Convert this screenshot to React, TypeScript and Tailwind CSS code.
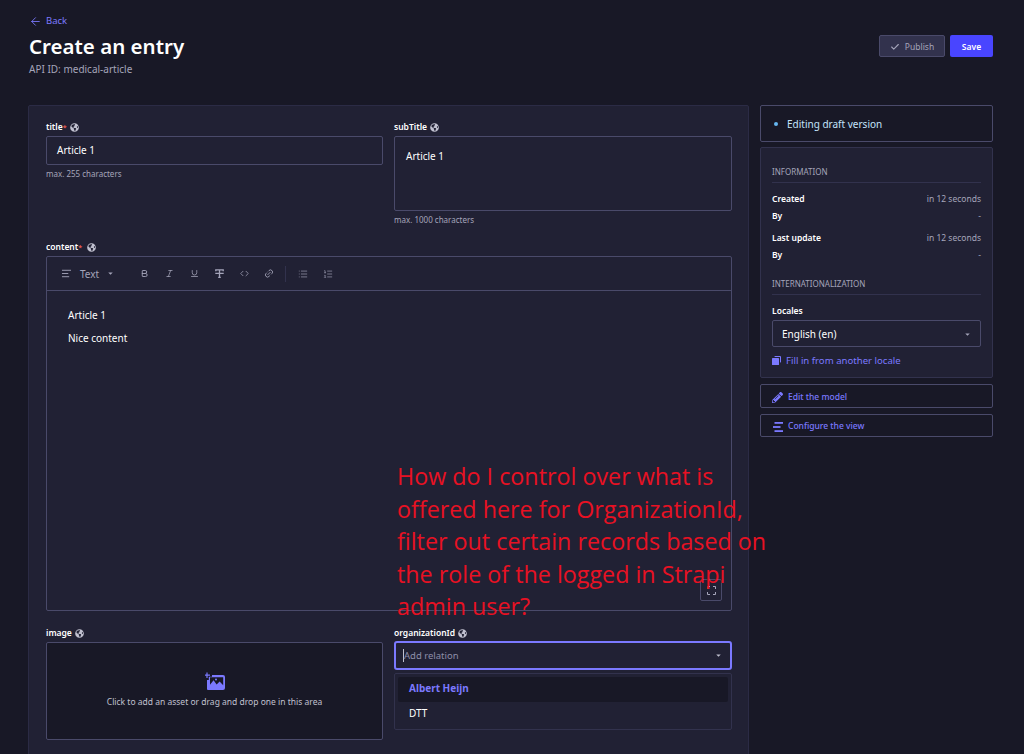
import { ArrowLeft, Check, Bold, Italic, Underline, Code, Link2, List, ListOrdered, AlignLeft } from "lucide-react";
import { FaGlobeAmericas, FaPencilAlt } from "react-icons/fa";

const Globe = ({ s = 9 }: { s?: number }) => <FaGlobeAmericas size={s} className="text-[#c0c0cf] shrink-0" />;

const Caret = ({ c = "#a5a5ba" }: { c?: string }) => (
  <svg width="5" height="3" viewBox="0 0 6 4" className="shrink-0"><path d="M0 0.5h6L3 3.7z" fill={c} /></svg>
);

const Label = ({ text, req, gap = "gap-[3px]" }: { text: string; req?: boolean; gap?: string }) => (
  <div className={`flex items-center h-[12px] mb-[3px] ${gap} text-[8.5px] font-semibold text-white leading-none`}>
    <span>{text}{req && <span className="text-[#ee5e52] text-[7px]">*</span>}</span>
    <Globe />
  </div>
);

const Helper = ({ text }: { text: string }) => (
  <div className="h-[12px] mt-[3px] text-[8px] leading-[12px] text-[#a5a5ba]">{text}</div>
);

const Row = ({ a, b, mt }: { a: string; b: string; mt: string }) => (
  <div className={`flex justify-between items-center h-[12px] ${mt} text-[8.5px] leading-none`}>
    <span className="font-semibold text-white">{a}</span>
    <span className="text-[#a5a5ba]">{b}</span>
  </div>
);

const Head = ({ text }: { text: string }) => (
  <div className="text-[8px] leading-[12px] text-[#a5a5ba] pb-[4px] border-b border-[#32324d]">{text}</div>
);

const Strike = () => (
  <svg width="9" height="9" viewBox="0 0 9 9" fill="none" stroke="#a5a5ba" strokeWidth="1.3">
    <path d="M0.8 2.2V0.9h7.4v1.3M4.5 1v7.4M3.2 8.4h2.6M0.3 4.4h8.4" />
  </svg>
);

const ToolIcon = ({ children, ml }: { children: React.ReactNode; ml: string }) => (
  <span className={`flex w-[10px] justify-center text-[#a5a5ba] ${ml}`}>{children}</span>
);

export default function App() {
  return (
    <div className="relative h-[754px] w-[1024px] overflow-hidden bg-[#181826] font-['Noto_Sans','Open_Sans',sans-serif]">
      <header className="flex justify-between pl-[29px] pr-[31px] pt-[14px] h-[105px]">
        <div>
          <div className="flex items-center gap-[4px] h-[14px] text-[9.5px] text-[#7b79ff]">
            <ArrowLeft size={13} strokeWidth={1.6} />
            <span>Back</span>
          </div>
          <h1 className="mt-[3px] text-[20.5px] leading-[30px] font-semibold text-white">Create an entry</h1>
          <div className="mt-[1px] text-[10px] leading-[14px] text-[#a5a5ba]">API ID: medical-article</div>
        </div>
        <div className="flex gap-[5px] pt-[21px]">
          <div className="flex items-center gap-[5px] h-[22px] w-[66px] justify-center rounded-[2px] border border-[#4a4a6a] bg-[#32324d] pt-[2px] text-[8.5px] text-[#a5a5ba]">
            <Check size={10} strokeWidth={2.6} />
            <span>Publish</span>
          </div>
          <div className="flex items-center justify-center h-[22px] w-[43px] rounded-[2px] bg-[#4945ff] pt-[2px] text-[8.5px] font-semibold text-white">Save</div>
        </div>
      </header>

      <div className="flex gap-[11px] pl-[28px] pr-[31px]">
        <main className="w-[721px] h-[660px] shrink-0 rounded-[2px] border border-[#2b2b45] bg-[#212134] pl-[17px] pr-[16px] pt-[15px]">
          <div className="grid grid-cols-[337px_338px] gap-x-[11px]">
            <div>
              <Label text="title" req />
              <div className="flex items-center h-[29px] rounded-[2px] border border-[#4a4a6a] bg-[#212134] pl-[10px] text-[10px] text-white">Article 1</div>
              <Helper text="max. 255 characters" />
            </div>
            <div>
              <Label text="subTitle" />
              <div className="h-[75px] rounded-[2px] border border-[#4a4a6a] bg-[#212134] pl-[11px] pt-[12px] text-[10px] leading-[14px] text-white">Article 1</div>
              <Helper text="max. 1000 characters" />
            </div>
          </div>

          <div className="mt-[15px]">
            <Label text="content" req gap="gap-[5px]" />
            <div className="relative h-[355px] rounded-[2px] border border-[#4a4a6a] bg-[#212134]">
              <div className="flex items-center h-[34px] border-b border-[#4a4a6a] pl-[14px]">
                <AlignLeft size={11} className="text-[#a5a5ba]" />
                <span className="ml-[8px] pt-px text-[10px] text-[#a5a5ba]">Text</span>
                <span className="ml-[9px]"><Caret /></span>
                <ToolIcon ml="ml-[26px]"><Bold size={9} strokeWidth={2.4} /></ToolIcon>
                <ToolIcon ml="ml-[15px]"><Italic size={9} strokeWidth={2} /></ToolIcon>
                <ToolIcon ml="ml-[15px]"><Underline size={9} strokeWidth={2} /></ToolIcon>
                <ToolIcon ml="ml-[15px]"><Strike /></ToolIcon>
                <ToolIcon ml="ml-[15px]"><Code size={9} strokeWidth={2} /></ToolIcon>
                <ToolIcon ml="ml-[15px]"><Link2 size={11} strokeWidth={2} className="-rotate-45" /></ToolIcon>
                <span className="ml-[11px] w-px h-[16px] bg-[#32324d]" />
                <ToolIcon ml="ml-[12px]"><List size={10} strokeWidth={1.6} /></ToolIcon>
                <ToolIcon ml="ml-[15px]"><ListOrdered size={10} strokeWidth={1.6} /></ToolIcon>
              </div>
              <div className="pl-[21px] pt-[17px] text-[10px] text-white">
                <p className="leading-[14px]">Article 1</p>
                <p className="mt-[9px] leading-[14px]">Nice content</p>
              </div>
              <div className="absolute right-[9px] bottom-[9px] flex items-center justify-center w-[22px] h-[22px] rounded-[2px] border border-[#4a4a6a]">
                <svg width="9" height="9" viewBox="0 0 9 9" fill="none" stroke="#a5a5ba" strokeWidth="1">
                  <path d="M0.5 3V0.5H3M6 0.5H8.5V3M8.5 6V8.5H6M3 8.5H0.5V6" />
                </svg>
              </div>
            </div>
          </div>

          <div className="grid grid-cols-[337px_338px] gap-x-[11px] mt-[16px]">
            <div>
              <Label text="image" />
              <div className="flex flex-col items-center h-[98px] rounded-[2px] border border-[#4a4a6a] bg-[#181826] pt-[29px]">
                <svg width="20" height="18" viewBox="0 0 20 18">
                  <path d="M4 3h14a2 2 0 0 1 2 2v11a2 2 0 0 1-2 2H3a1 1 0 0 1-1-1V8h1.8V4.8H7V3z" fill="#7b79ff" />
                  <path d="M5 5.2h13.2v8l-3.6-3.6-3 3-3-4.4-3.6 4.6z" fill="#181826" />
                  <circle cx="11" cy="7.4" r="1" fill="#7b79ff" />
                  <path d="M2 0.5v5.4M0 3.2h5" stroke="#7b79ff" strokeWidth="1.2" />
                </svg>
                <div className="mt-[5px] text-[8.5px] leading-[14px] text-[#c0c0cf]">Click to add an asset or drag and drop one in this area</div>
              </div>
            </div>
            <div>
              <div className="flex items-center h-[12px] mb-[2px] gap-[3px] text-[8.5px] font-semibold text-white leading-none">
                <span>organizationId</span>
                <Globe />
              </div>
              <div className="flex items-center justify-between h-[29px] rounded-[3px] border-2 border-[#7b79ff] bg-[#212134] pl-[7px] pr-[9px] text-[9.5px] text-[#8e8ea9]">
                <span className="border-l border-[#c0c0cf] leading-[13px]">Add relation</span>
                <Caret c="#c0c0cf" />
              </div>
              <div className="mt-[3px] h-[57px] rounded-[2px] border border-[#32324d] bg-[#212134] p-[3px] text-[10px]">
                <div className="flex items-center h-[25px] rounded-[2px] bg-[#181826] pb-[2px] pl-[11px] font-bold text-[#7b79ff]">Albert Heijn</div>
                <div className="flex items-center h-[25px] pb-[2px] pl-[11px] text-white">DTT</div>
              </div>
            </div>
          </div>
        </main>

        <aside className="w-[233px] shrink-0">
          <div className="flex items-center h-[37px] rounded-[2px] border border-[#4a4a6a] bg-[#181826] pl-[13px] pt-px text-[10px]">
            <span className="w-[4px] h-[4px] rounded-full bg-[#66b7f1]" />
            <span className="ml-[9px] text-[#c4e4fb]">Editing draft version</span>
          </div>
          <div className="mt-[5px] h-[231px] rounded-[2px] border border-[#32324d] bg-[#212134] px-[11px] pt-[18px]">
            <Head text="INFORMATION" />
            <Row a="Created" b="in 12 seconds" mt="mt-[10px]" />
            <Row a="By" b="-" mt="mt-[5px]" />
            <Row a="Last update" b="in 12 seconds" mt="mt-[10px]" />
            <Row a="By" b="-" mt="mt-[5px]" />
            <div className="mt-[17px]"><Head text="INTERNATIONALIZATION" /></div>
            <div className="mt-[10px] h-[12px] text-[8.5px] leading-[12px] font-semibold text-white">Locales</div>
            <div className="mt-[3px] flex items-center justify-between h-[27px] rounded-[2px] border border-[#4a4a6a] pl-[9px] pr-[10px] pt-[2px] text-[10px] text-white">
              <span>English (en)</span>
              <Caret />
            </div>
            <div className="mt-[7px] flex items-center gap-[5px] text-[9.6px] leading-[13px] text-[#7b79ff]">
              <svg width="9" height="9" viewBox="0 0 9 9">
                <path d="M2.6 0.5h5.9v5.9" fill="none" stroke="#7b79ff" strokeWidth="1" />
                <rect x="0" y="2" width="7" height="7" rx="0.6" fill="#7b79ff" />
              </svg>
              <span>Fill in from another locale</span>
            </div>
          </div>
          <div className="mt-[6px] flex items-center h-[24px] rounded-[2px] border border-[#4a4a6a] bg-[#181826] pl-[11px] pt-[2px] gap-[5px] text-[8.5px] font-medium text-[#7b79ff]">
            <FaPencilAlt size={11} />
            <span>Edit the model</span>
          </div>
          <div className="mt-[6px] flex items-center h-[23px] rounded-[2px] border border-[#4a4a6a] bg-[#181826] pl-[12px] pt-[2px] gap-[5px] text-[8.5px] font-medium text-[#7b79ff]">
            <svg width="10" height="10" viewBox="0 0 10 10" fill="#7b79ff">
              <rect x="1.5" y="0" width="8.5" height="1.8" />
              <rect x="0" y="4.1" width="7.5" height="1.8" />
              <rect x="1.5" y="8.2" width="8.5" height="1.8" />
            </svg>
            <span>Configure the view</span>
          </div>
        </aside>
      </div>

      <div className="absolute left-[397px] top-[460px] whitespace-nowrap font-['Open_Sans','Noto_Sans',sans-serif] text-[23.3px] leading-[32.5px] text-[#e81123]">
        How do I control over what is<br />offered here for OrganizationId,<br />filter out certain records based on<br />the role of the logged in Strapi<br />admin user?
      </div>
    </div>
  );
}
